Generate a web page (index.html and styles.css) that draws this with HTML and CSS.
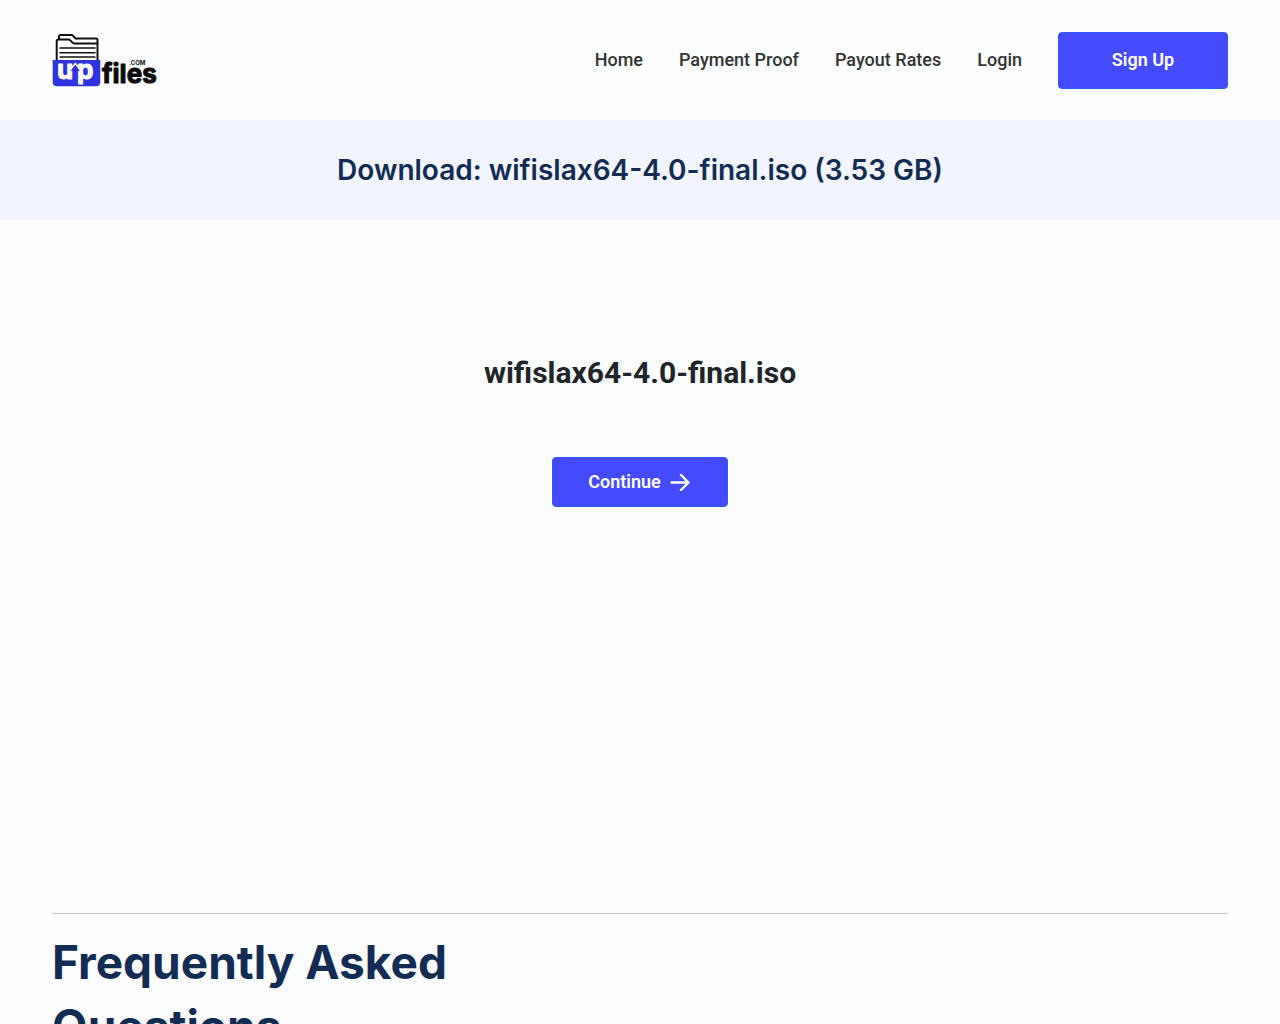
FILE: index.html
```html
<!DOCTYPE html>
<html lang="en">
<head>
  <meta charset="UTF-8" />
  <meta name="viewport" content="width=device-width, initial-scale=1.0"/>
  <title>Download: wifislax64-4.0-final.iso (3.53 GB)</title>
  <link rel="stylesheet" href="styles.css">
</head>

<body>
  <header class="site-header">
    <a href="#" class="logo" aria-label="UpFiles.com">
      <svg width="108" height="54" viewBox="0 0 108 54" aria-hidden="true">
        <!-- folder -->
        <g fill="none" stroke="#111" stroke-width="2" stroke-linejoin="round">
          <path d="M7 5V2.500Q7 1 8.500 1H19.500Q20.500 1 21.300 2L23.500 4.500H44Q45.500 4.500 45.500 6V26"/>
          <path d="M4.700 26V7Q4.700 5.400 6.300 5.400H16.500Q17.500 5.400 18.300 6.400L20.500 8.600Q21.200 9.400 22.300 9.400H45.500"/>
          <path d="M7.500 14H43.500M7.500 18.700H43.500M7.500 23H43.500" stroke-width="1.600"/>
        </g>
        <path d="M.7 26H48.300V48Q48.300 52.300 44 52.300H5Q.7 52.300 .7 48Z" fill="#3034e0"/>
        <text x="5" y="45" class="logo-up">u</text>
        <text x="25" y="45" class="logo-up">p</text>
        <!-- upload arrow between the letters -->
        <path d="M17.500 36.500L23.300 29.500L29 36.500" fill="none" stroke="#fff" stroke-width="1.600"/>
        <path d="M18.500 37L23.300 31.500L28 37H25V48H21.800V37Z" fill="#3034e0"/>
        <text x="50" y="49" class="logo-files">files</text>
        <text x="77" y="31" class="logo-com">.COM</text>
      </svg>
    </a>
    <nav class="main-nav">
      <a href="#">Home</a>
      <a href="#">Payment Proof</a>
      <a href="#">Payout Rates</a>
      <a href="#">Login</a>
      <a href="#" class="btn signup-btn">Sign Up</a>
    </nav>
  </header>

  <div class="page-banner">
    <h1>Download: wifislax64-4.0-final.iso (3.53 GB)</h1>
  </div>

  <main class="container">
    <section class="download">
      <h2 class="file-name">wifislax64-4.0-final.iso</h2>
      <button type="button" class="btn continue-btn">
        Continue
        <svg width="22" height="20" viewBox="0 0 22 20" fill="none" stroke="#fff" stroke-width="2.400" stroke-linecap="round" stroke-linejoin="round" aria-hidden="true">
          <path d="M1.500 11.500H18.500M11 4L18.500 11.500L11 19"/>
        </svg>
      </button>
    </section>

    <section class="faq">
      <h2>Frequently Asked Questions</h2>
    </section>
  </main>
</body>
</html>
```
FILE: styles.css
```css
* {
  box-sizing: border-box;
}

body {
  margin: 0;
  font-family: Roboto, "Liberation Sans", sans-serif;
  font-size: 18px;
  color: #212529;
  background: #fcfdff;
}

a {
  color: inherit;
  text-decoration: none;
}

.site-header {
  display: flex;
  justify-content: space-between;
  align-items: center;
  padding: 32px 52px 31px;
}

.logo svg {
  display: block;
}

.logo-up {
  font: 700 26px Inter, sans-serif;
  fill: #fff;
  stroke: #fff;
  stroke-width: 1px;
  stroke-linejoin: round;
}

.logo-files {
  font: 700 26px Inter, sans-serif;
  fill: #0b0b0b;
  stroke: #0b0b0b;
  stroke-width: 1px;
  stroke-linejoin: round;
}

.logo-com {
  font: 700 6px Inter, sans-serif;
  fill: #0b0b0b;
}

.main-nav {
  display: flex;
  align-items: center;
  gap: 36px;
  color: #333;
  font-weight: 500;
}

.main-nav a {
  padding-bottom: 2px;
}

.btn {
  display: inline-flex;
  justify-content: center;
  align-items: center;
  padding: 0 16px 2px;
  background: #454aff;
  color: #fff;
  border: 1px solid #2f5cf5;
  border-radius: 4px;
  font-family: inherit;
  font-size: 18px;
  font-weight: 600;
  cursor: pointer;
}

.btn:hover {
  background: #3438e6;
}

.signup-btn {
  min-width: 170px;
  height: 57px;
}

.page-banner {
  padding: 30px 52px;
  background: #f2f4ff;
  text-align: center;
}

.page-banner h1 {
  margin: 0;
  font-family: Inter, sans-serif;
  font-size: 28px;
  font-weight: 600;
  line-height: 40px;
  color: #132c54;
}

.container {
  padding: 0 52px;
}

.download {
  display: flex;
  flex-direction: column;
  align-items: center;
  gap: 64px;
  padding: 133px 0 406px;
}

.file-name {
  margin: 0;
  font-size: 30px;
  font-weight: 700;
  line-height: 40px;
}

.continue-btn {
  gap: 9px;
  min-width: 176px;
  height: 50px;
}

.faq {
  border-top: 1px solid #c3c5c8;
  padding: 16px 0 64px;
}

.faq h2 {
  max-width: 480px;
  margin: 0;
  font-family: Inter, sans-serif;
  font-size: 46px;
  font-weight: 700;
  line-height: 64px;
  color: #132c54;
}

@media (max-width: 800px) {
  .site-header {
    flex-direction: column;
    gap: 24px;
  }

  .main-nav {
    flex-wrap: wrap;
    justify-content: center;
  }
}
```
